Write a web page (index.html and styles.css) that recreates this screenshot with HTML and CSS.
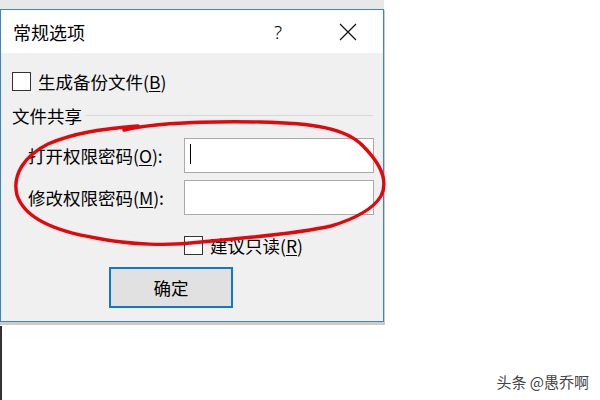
FILE: index.html
```html
<!DOCTYPE html>
<html lang="zh-CN">
<head>
    <meta charset="UTF-8">
    <meta name="viewport" content="width=device-width, initial-scale=1.0">
    <title>常规选项</title>
    <link rel="stylesheet" href="styles.css">
</head>
<body>
    <div class="screen">
        <div class="band"></div>
        <!-- 常规选项对话框 -->
        <div class="dialog">
            <div class="titlebar">
                <span class="title">常规选项</span>
                <span class="help">?</span>
                <span class="close">
                    <svg width="18" height="18" viewBox="0 0 18 18">
                        <path d="M1 1 L17 17 M17 1 L1 17" stroke="#111" stroke-width="1.2" fill="none"/>
                    </svg>
                </span>
            </div>
            <div class="body">
                <div class="check">
                    <span class="box"></span>
                    <span>生成备份文件(<u>B</u>)</span>
                </div>
                <div class="group">
                    <span>文件共享</span>
                    <span class="line"></span>
                </div>
                <div class="form">
                    <label>打开权限密码(<u>O</u>):</label>
                    <div class="input"><span class="caret"></span></div>
                    <label>修改权限密码(<u>M</u>):</label>
                    <div class="input"></div>
                </div>
                <div class="check readonly">
                    <span class="box"></span>
                    <span>建议只读(<u>R</u>)</span>
                </div>
                <div class="btnrow">
                    <button class="ok">确定</button>
                </div>
            </div>
        </div>
        <div class="stub"></div>

        <!-- 手画的红圈 -->
        <svg class="scribble" width="600" height="400" viewBox="0 0 600 400">
            <path d="M124,130 C150,124 200,121 260,122 C312,123 346,128 363,146 C379,162 389,180 381,196 C372,211 351,220 331,226 C291,235 241,238 201,242 C170,246 130,245 96,238 C60,232 25,220 17,195 C12,175 24,156 48,144 C74,133 100,129 138,126"
                  stroke="#e3070b" stroke-width="3.4" fill="none" stroke-linecap="round"/>
        </svg>
        <div class="mark">头条 @愚乔啊</div>
    </div>
</body>
</html>
```
FILE: styles.css
```css
* {
    margin: 0;
    padding: 0;
    box-sizing: border-box;
}
body {
    background: #fff;
    font-family: "Noto Sans CJK SC", "Noto Sans", sans-serif;
    color: #000;
}
.screen {
    width: 600px;
    height: 400px;
    position: relative;
    overflow: hidden;
}
.band {
    width: 384px;
    height: 9px;
    background: #e8e8e8;
}
.dialog {
    width: 384px;
    height: 313px;
    border: 1px solid #3c86c8;
    background: #f0f0f0;
    box-shadow: 0 2px 0 1px #cfcbcb;
}
/* 标题栏 */
.titlebar {
    height: 43px;
    background: #fff;
    display: flex;
    align-items: center;
    padding-left: 12px;
    font-size: 18px;
}
.title {
    flex: 1;
}
.help {
    width: 20px;
    margin-right: 51px;
    text-align: center;
    font-family: "Noto Sans", sans-serif;
    font-size: 19px;
    font-weight: 300;
}
.close {
    width: 18px;
    height: 18px;
    margin-right: 26px;
    display: flex;
}
.body {
    padding: 19px 0 0 11px;
    font-size: 17.5px;
}
.check {
    display: flex;
    align-items: center;
    gap: 7px;
    height: 19px;
}
.box {
    width: 19px;
    height: 19px;
    border: 1px solid #333;
    background: #fff;
}
u {
    text-decoration-thickness: 1px;
    text-underline-offset: 2px;
}
.group {
    margin-top: 12px;
    display: flex;
    align-items: center;
    height: 24px;
    padding-right: 10px;
}
.group .line {
    flex: 1;
    height: 1px;
    background: #d8d8d8;
    margin-left: 4px;
}
.form {
    margin-top: 11px;
    padding-left: 16px;
    display: grid;
    grid-template-columns: 156px 190px;
    row-gap: 7px;
    align-items: center;
}
.form label {
    line-height: 35px;
    white-space: nowrap;
}
.input {
    height: 35px;
    background: #fff;
    border: 1px solid #a9a9a9;
    padding: 5px 0 0 5px;
}
.caret {
    display: block;
    width: 1px;
    height: 20px;
    background: #000;
}
.readonly {
    margin-top: 21px;
    margin-left: 172px;
}
.btnrow {
    margin-top: 12px;
    padding-left: 97px;
}
.ok {
    width: 124px;
    height: 41px;
    background: #e1e1e1;
    border: 2px solid #0f78d2;
    font-family: "Noto Sans CJK SC", sans-serif;
    font-size: 17.5px;
    color: #000;
}
.stub {
    margin-top: 4px;
    width: 2px;
    height: 80px;
    background: #333;
}
.scribble {
    position: absolute;
    left: 0;
    top: 0;
}
.mark {
    position: absolute;
    right: 11px;
    bottom: 8px;
    font-size: 15px;
    color: #444;
}
```
